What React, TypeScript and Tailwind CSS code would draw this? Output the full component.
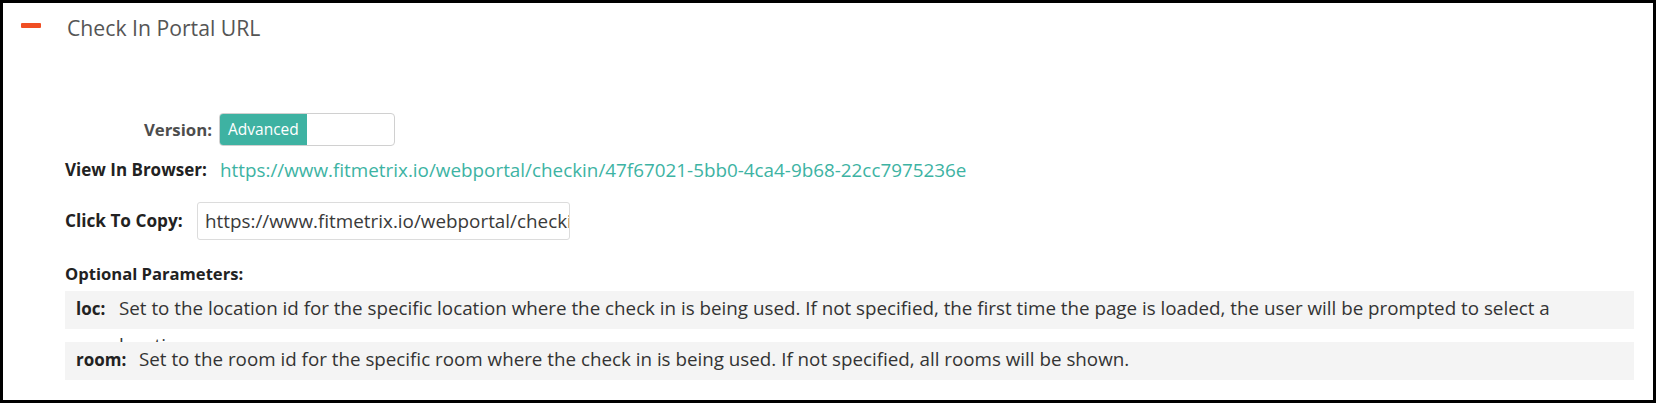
import React from "react";

export default function App() {
  const url =
    "https://www.fitmetrix.io/webportal/checkin/47f67021-5bb0-4ca4-9b68-22cc7975236e";
  return (
    <div
      className="box-border h-[403px] w-[1656px] overflow-hidden border-[3px] border-black bg-white"
      style={{ fontFamily: '"Open Sans", "Liberation Sans", sans-serif' }}
    >
      {/* Header */}
      <div className="flex h-[50px] items-start">
        <div className="ml-[18px] mt-[20px] h-[5px] w-[20px] rounded-[1px] bg-[#f04e23]" />
        <div className="ml-[26px] mt-[11px] text-[21.2px] leading-[28px] text-[#555555]">
          Check In Portal URL
        </div>
      </div>

      <div className="mt-[60px] pl-[62px]">
        {/* Version */}
        <div className="flex h-[33px] items-center">
          <div className="w-[147px] text-right text-[16.8px] font-bold text-[#4d4d4d]">
            Version:
          </div>
          <div className="ml-[7px] box-border flex h-[33px] w-[176px] overflow-hidden rounded-[4px] border border-[#d0d0d0]">
            <div className="flex h-full w-[87px] items-center bg-[#3eb2a2] pl-[8px] text-[15.5px] text-white">
              Advanced
            </div>
          </div>
        </div>

        {/* View In Browser */}
        <div className="mt-[12px] flex h-[24px] items-center">
          <div className="w-[155px] shrink-0 text-[17px] font-bold text-[#222222]">View In Browser:</div>
          <a className="text-[18.85px] text-[#3db3a3]" href="#">
            {url}
          </a>
        </div>

        {/* Click To Copy */}
        <div className="mt-[20px] flex h-[38px] items-center">
          <div className="w-[132px] shrink-0 text-[17.2px] font-bold text-[#222222]">Click To Copy:</div>
          <div className="box-border flex h-[38px] w-[373px] items-center overflow-hidden whitespace-nowrap rounded-[3px] border border-[#dcdcdc] pl-[7px] pr-[4px] text-[18.85px] text-[#3a3a3a]">
            {url}
          </div>
        </div>

        {/* Optional Parameters */}
        <div className="mt-[22px] flex h-[24px] items-center">
          <div className="text-[16.6px] font-bold text-[#222222]">Optional Parameters:</div>
        </div>

        {/* loc */}
        <div className="mt-[5px] h-[51px] w-[1569px] overflow-hidden">
          <div className="flex h-[38px] items-start bg-[#f4f4f4] pl-[11px] pr-[34px]">
            <div className="-mt-[1px] w-[43px] shrink-0 text-[17px] font-bold leading-[37px] text-[#222222]">
              loc:
            </div>
            <div className="-mt-[1px] flex-1 text-[18.8px] leading-[37px] text-[#333333]">
              Set to the location id for the specific location where the check in is being used. If not specified, the first time the page is loaded, the user will be prompted to select a location.
            </div>
          </div>
        </div>

        {/* room */}
        <div className="flex h-[38px] w-[1569px] items-start bg-[#f4f4f4] pl-[11px]">
          <div className="-mt-[1px] w-[63px] shrink-0 text-[17px] font-bold leading-[37px] text-[#222222]">
            room:
          </div>
          <div className="-mt-[1px] flex-1 text-[18.8px] leading-[37px] text-[#333333]">
            Set to the room id for the specific room where the check in is being used. If not specified, all rooms will be shown.
          </div>
        </div>
      </div>
    </div>
  );
}
